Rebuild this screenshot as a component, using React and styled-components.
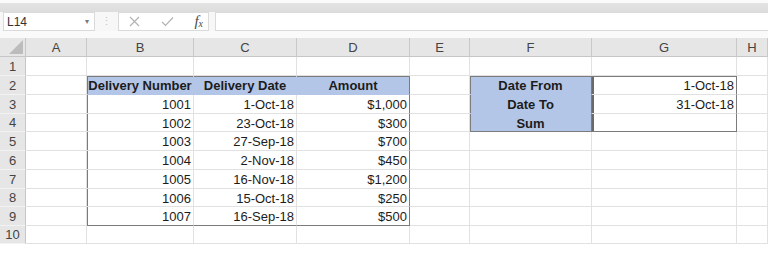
import React from "react";
import styled, { createGlobalStyle } from "styled-components";

const GlobalStyle = createGlobalStyle`
  body {
    margin: 0;
    background: #ffffff;
    font-family: "Liberation Sans", Arial, sans-serif;
  }
`;

const COLS = ["A", "B", "C", "D", "E", "F", "G", "H"];
const ROW_HEIGHTS = [19, 19, 19, 18, 19, 19, 19, 18, 19, 18];
const DARK = "#7b7b7b";
const FILL = "#b4c6e7";
const GRID = "#e1e1e1";

const values = {
  B2: "Delivery Number", C2: "Delivery Date", D2: "Amount",
  B3: "1001", C3: "1-Oct-18", D3: "$1,000",
  B4: "1002", C4: "23-Oct-18", D4: "$300",
  B5: "1003", C5: "27-Sep-18", D5: "$700",
  B6: "1004", C6: "2-Nov-18", D6: "$450",
  B7: "1005", C7: "16-Nov-18", D7: "$1,200",
  B8: "1006", C8: "15-Oct-18", D8: "$250",
  B9: "1007", C9: "16-Sep-18", D9: "$500",
  F2: "Date From", G2: "1-Oct-18",
  F3: "Date To", G3: "31-Oct-18",
  F4: "Sum",
};

function cellStyle(col, row) {
  const c = COLS.indexOf(col);
  const s = { align: "right" };
  // delivery table B2:D9
  if (c >= 1 && c <= 3 && row >= 2 && row <= 9) {
    s.top = row === 2;
    s.bottom = row === 9;
    s.left = c === 1;
    s.right = c === 3;
    if (row === 2) {
      s.fill = true;
      s.bold = true;
      s.align = "center";
      s.openBottom = true;
    }
  }
  // criteria box F2:G4
  if (c >= 5 && c <= 6 && row >= 2 && row <= 4) {
    s.top = row === 2;
    s.bottom = row === 4;
    s.left = c === 5;
    s.right = c === 6;
    if (c === 5) {
      s.fill = true;
      s.bold = true;
      s.align = "center";
      s.right = true;
      s.openBottom = row !== 4;
    } else {
      s.thick = true;
    }
  }
  return s;
}

function App() {
  return (
    <>
      <GlobalStyle />
      <Window>
        <TopStrip />
        <FormulaBar>
          <NameBox>
            <span>L14</span>
            <Caret>▾</Caret>
          </NameBox>
          <Grip>⋮</Grip>
          <FxBox>
            <svg width="11" height="11" viewBox="0 0 11 11">
              <path d="M1 1 L10 10 M10 1 L1 10" stroke="#b3b3b3" strokeWidth="1.2" fill="none" />
            </svg>
            <svg width="13" height="11" viewBox="0 0 13 11">
              <path d="M1 6 L4.5 9.5 L12 1.5" stroke="#b3b3b3" strokeWidth="1.2" fill="none" />
            </svg>
            <Fx>
              f<sub>x</sub>
            </Fx>
          </FxBox>
          <FormulaInput />
        </FormulaBar>
        <Spacer />
        <Sheet>
          <Corner>
            <svg width="14" height="14" viewBox="0 0 14 14">
              <polygon points="14,0 14,14 0,14" fill="#bcbcbc" />
            </svg>
          </Corner>
          {COLS.map((col) => (
            <ColHead key={col}>{col}</ColHead>
          ))}
          {ROW_HEIGHTS.map((h, i) => {
            const row = i + 1;
            return (
              <React.Fragment key={row}>
                <RowHead>{row}</RowHead>
                {COLS.map((col) => {
                  const s = cellStyle(col, row);
                  return (
                    <Cell
                      key={col}
                      $align={s.align}
                      $bold={s.bold}
                      $fill={s.fill}
                      $top={s.top}
                      $bottom={s.bottom}
                      $left={s.left}
                      $right={s.right}
                      $thick={s.thick}
                      $openBottom={s.openBottom}
                    >
                      {values[col + row] || ""}
                    </Cell>
                  );
                })}
              </React.Fragment>
            );
          })}
        </Sheet>
      </Window>
    </>
  );
}

export default App;

const Window = styled.div`
  width: 768px;
  height: 254px;
  overflow: hidden;
  background: #ffffff;
`;

const TopStrip = styled.div`
  height: 12px;
  background: linear-gradient(#fbfbfb 0 3px, #e4e4e4 3px, #dcdcdc 100%);
`;

const FormulaBar = styled.div`
  height: 19px;
  display: flex;
  align-items: stretch;
  padding-left: 3px;
  background: #f7f7f7;
`;

const NameBox = styled.div`
  width: 92px;
  box-sizing: border-box;
  display: flex;
  align-items: center;
  justify-content: space-between;
  padding: 0 5px 0 3px;
  background: #ffffff;
  border: 1px solid #dadada;
  font-size: 12px;
  color: #333333;
`;

const Caret = styled.span`
  font-size: 8px;
  color: #7a7a7a;
`;

const Grip = styled.div`
  width: 23px;
  display: flex;
  align-items: center;
  justify-content: center;
  color: #c4c4c4;
  font-size: 11px;
`;

const FxBox = styled.div`
  width: 91px;
  box-sizing: border-box;
  display: flex;
  align-items: center;
  justify-content: space-between;
  padding: 0 5px 0 10px;
  background: #ffffff;
  border: 1px solid #dadada;
`;

const Fx = styled.span`
  font-family: "Liberation Serif", "DejaVu Serif", serif;
  font-style: italic;
  font-size: 15px;
  line-height: 1;
  color: #4a4a4a;
  sub {
    font-size: 10px;
    vertical-align: -1px;
  }
`;

const FormulaInput = styled.div`
  flex: 1;
  margin-left: 6px;
  background: #ffffff;
  border: 1px solid #dadada;
  border-right: none;
`;

const Spacer = styled.div`
  height: 7px;
  background: #fafafa;
`;

const Sheet = styled.div`
  display: grid;
  grid-template-columns: 26px 61px 107px 103px 113px 60px 122px 145px 1fr;
  grid-template-rows: 19px ${ROW_HEIGHTS.map((h) => h + "px").join(" ")};
  font-size: 13px;
  color: #1c1c1c;
`;

const Corner = styled.div`
  background: #e6e6e6;
  border-right: 1px solid #c6c6c6;
  border-bottom: 1px solid #c6c6c6;
  display: flex;
  align-items: flex-end;
  justify-content: flex-end;
  padding: 0 2px 2px 0;
`;

const ColHead = styled.div`
  background: #e6e6e6;
  border-right: 1px solid #c9c9c9;
  border-bottom: 1px solid #c6c6c6;
  display: flex;
  align-items: center;
  justify-content: center;
  color: #444444;
  font-size: 13px;
`;

const RowHead = styled.div`
  background: #e6e6e6;
  border-right: 1px solid #c6c6c6;
  border-bottom: 1px solid #f2f2f2;
  display: flex;
  align-items: center;
  justify-content: center;
  color: #444444;
  font-size: 13px;
`;

const Cell = styled.div`
  box-sizing: border-box;
  display: flex;
  align-items: center;
  justify-content: ${(p) =>
    p.$align === "center" ? "center" : p.$align === "left" ? "flex-start" : "flex-end"};
  padding: 1px 2px 0;
  white-space: nowrap;
  overflow: visible;
  font-weight: ${(p) => (p.$bold ? 700 : 400)};
  background: ${(p) => (p.$fill ? FILL : "transparent")};
  border-right: 1px solid
    ${(p) => (p.$right ? DARK : p.$fill ? FILL : GRID)};
  border-bottom: 1px solid
    ${(p) => (p.$bottom ? DARK : p.$openBottom ? FILL : GRID)};
  box-shadow: ${(p) => {
    const s = [];
    if (p.$top) s.push(`inset 0 1px 0 ${DARK}`);
    if (p.$left) s.push(`inset 1px 0 0 ${DARK}`);
    if (p.$thick) s.push(`inset 2px 0 0 #6a6a6a`);
    return s.length ? s.join(", ") : "none";
  }};
`;
